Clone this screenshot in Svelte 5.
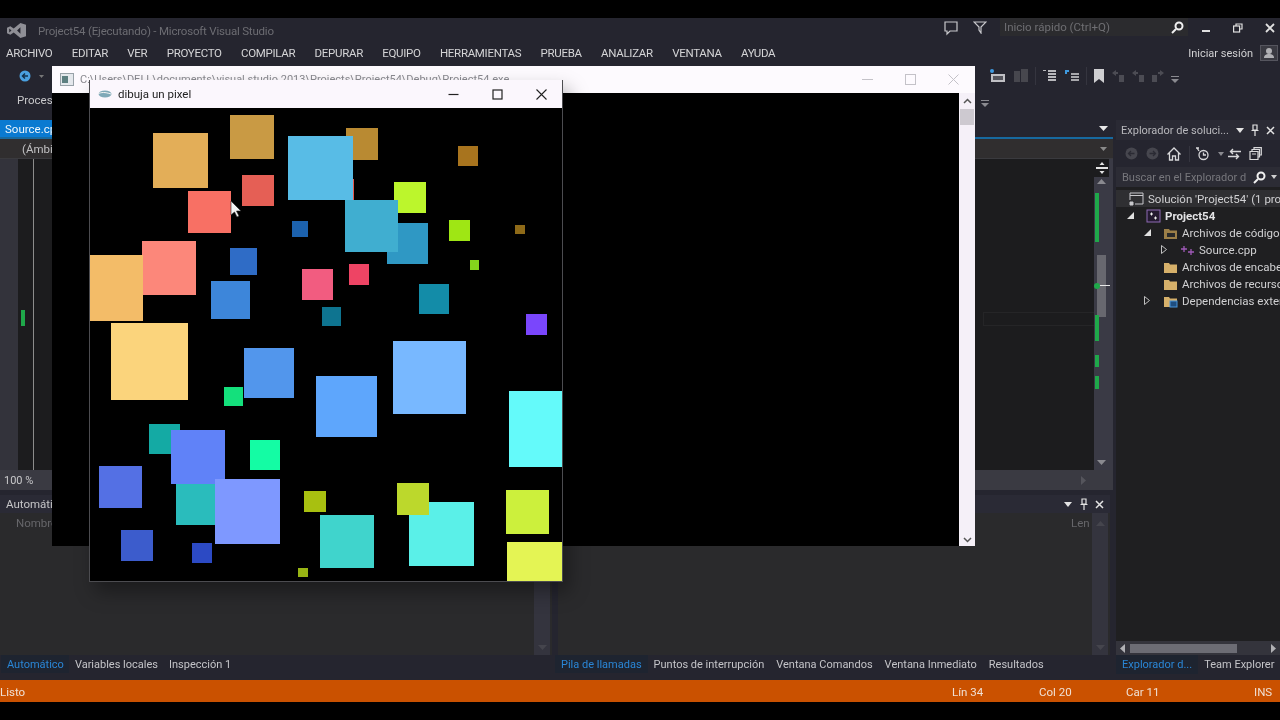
<script>
  const menu = ['ARCHIVO', 'EDITAR', 'VER', 'PROYECTO', 'COMPILAR', 'DEPURAR', 'EQUIPO', 'HERRAMIENTAS', 'PRUEBA', 'ANALIZAR', 'VENTANA', 'AYUDA'];

  // x1, y1, x2, y2 in page pixels, painted in this order
  const squares = [
    [153, 133, 208, 188, '#e3ae58'],
    [230, 115, 274, 159, '#c99a44'],
    [346, 128, 378, 160, '#b98a32'],
    [330, 179, 354, 200, '#e5594f'],
    [288, 136, 353, 200, '#58bce6'],
    [458, 146, 478, 166, '#a8741e'],
    [242, 175, 274, 206, '#e55f55'],
    [188, 191, 231, 233, '#f87064'],
    [394, 182, 426, 213, '#bcf62c'],
    [387, 223, 428, 264, '#2f98c4'],
    [345, 200, 398, 252, '#40aed0'],
    [292, 221, 308, 237, '#1c62ae'],
    [449, 220, 470, 241, '#9fe614'],
    [515, 225, 525, 234, '#8e6a18'],
    [470, 260, 479, 270, '#84d41c'],
    [230, 248, 257, 275, '#2f6cc6'],
    [142, 241, 196, 295, '#fc877a'],
    [90, 255, 143, 321, '#f3bc68'],
    [302, 269, 333, 300, '#f25c80'],
    [349, 264, 369, 285, '#ee4464'],
    [211, 281, 250, 319, '#3d86da'],
    [419, 284, 449, 314, '#138ca8'],
    [322, 307, 341, 326, '#0e7490'],
    [526, 314, 547, 335, '#7a46fc'],
    [111, 323, 188, 400, '#fbd47c'],
    [244, 348, 294, 398, '#5296ec'],
    [224, 387, 243, 406, '#14e07c'],
    [316, 376, 377, 437, '#5ea6fc'],
    [393, 341, 466, 414, '#78b8ff'],
    [509, 391, 563, 467, '#64fafa'],
    [149, 424, 180, 454, '#14aaa4'],
    [171, 430, 225, 484, '#6082f8'],
    [250, 440, 280, 470, '#14fca4'],
    [99, 466, 142, 508, '#5470e4'],
    [176, 484, 215, 525, '#2abcbc'],
    [215, 479, 280, 544, '#7e98ff'],
    [304, 491, 326, 512, '#a8c010'],
    [409, 502, 474, 566, '#5af0e8'],
    [397, 483, 429, 515, '#bcd82c'],
    [506, 490, 549, 534, '#ccf03c'],
    [320, 515, 374, 568, '#40d4cc'],
    [121, 530, 153, 561, '#3c5ccc'],
    [192, 543, 212, 563, '#2c4ac4'],
    [507, 542, 562, 581, '#e4f454'],
    [298, 568, 308, 577, '#98b414']
  ];

  const tree = [
    { depth: 0, label: "Solución 'Project54' (1 proyecto)", icon: 'sln', selected: true },
    { depth: 1, label: 'Project54', icon: 'proj', arrow: 'open', bold: true },
    { depth: 2, label: 'Archivos de código fuente', icon: 'openfolder', arrow: 'open' },
    { depth: 3, label: 'Source.cpp', icon: 'cpp', arrow: 'closed' },
    { depth: 2, label: 'Archivos de encabezado', icon: 'folder' },
    { depth: 2, label: 'Archivos de recursos', icon: 'folder' },
    { depth: 2, label: 'Dependencias externas', icon: 'deps', arrow: 'closed' }
  ];

  const leftTabs = ['Automático', 'Variables locales', 'Inspección 1'];
  const midTabs = ['Pila de llamadas', 'Puntos de interrupción', 'Ventana Comandos', 'Ventana Inmediato', 'Resultados'];
  const marks = [[193, 49], [315, 26], [355, 12], [376, 13]];
</script>

<div class="ide">
  <header class="titlebar">
    <svg class="logo" width="19" height="17" viewBox="0 0 17 18" preserveAspectRatio="none"><path d="M12 1l5 2v12l-5 2-6-6-3 2.500-3-1.500v-6l3-1.500 3 2.500zM12 5.500l-3 3.500 3 3.500zM2 7v4l2-2z" fill="#8f8f96" fill-rule="evenodd"/></svg>
    <span class="apptitle">Project54 (Ejecutando) - Microsoft Visual Studio</span>
    <div class="titleright">
      <svg width="16" height="16" viewBox="0 0 16 16" fill="none" stroke="#c8c8cc" stroke-width="1.200"><path d="M2 2h12v9H7l-3 3v-3H2z"/></svg>
      <svg class="filter" width="14" height="14" viewBox="0 0 14 14" fill="none" stroke="#c8c8cc" stroke-width="1.200"><path d="M1 2h12L8 7v6L6 10V7z"/></svg>
      <div class="quick">
        <span>Inicio rápido (Ctrl+Q)</span>
        <svg width="13" height="13" viewBox="0 0 13 13" fill="none" stroke="#f0f0f0" stroke-width="2"><circle cx="8" cy="5" r="3.500"/><path d="M5 8l-4 4"/></svg>
      </div>
      <div class="winbtns">
        <svg width="10" height="10" viewBox="0 0 10 10"><rect x="1" y="7" width="8" height="2" fill="#e0e0e0"/></svg>
        <svg width="10" height="10" viewBox="0 0 10 10" fill="none" stroke="#e0e0e0" stroke-width="1.200"><rect x="0.600" y="3" width="6" height="6"/><path d="M3 3V1h6v5H7"/></svg>
        <svg width="10" height="10" viewBox="0 0 10 10" stroke="#e0e0e0" stroke-width="1.800"><path d="M1 1l8 8M9 1l-8 8"/></svg>
      </div>
    </div>
  </header>

  <nav class="menubar">
    {#each menu as item}
      <span>{item}</span>
    {/each}
    <div class="signin">
      Iniciar sesión
      <svg width="18" height="16" viewBox="0 0 18 16"><rect x="0.500" y="0.500" width="17" height="15" fill="#3a3a42" stroke="#55555e"/><circle cx="9" cy="6" r="3" fill="#b0b0b4"/><path d="M4 13c0-3 2-4 5-4s5 1 5 4z" fill="#b0b0b4"/></svg>
    </div>
  </nav>

  <div class="toolbar">
    <svg class="back" width="26" height="14" viewBox="0 0 26 14"><circle cx="6" cy="7" r="5.500" fill="#4aa0e0"/><path d="M9 7H4M6 4.500L3.500 7 6 9.500" stroke="#12324e" stroke-width="1.500" fill="none"/><path d="M20 6h5l-2.500 3z" fill="#777"/></svg>
    <div class="tools">
      <svg width="18" height="16" viewBox="0 0 18 16"><circle cx="3" cy="3" r="2" fill="#3f9ae0"/><path d="M2 6h14v8H2z" fill="#c0c0c4"/><path d="M4 8h10v4H4z" fill="#55555c"/></svg>
      <svg width="16" height="16" viewBox="0 0 16 16" fill="#47474e"><path d="M1 3h6v11H1zM8 1h7v13H8z"/></svg>
      <i class="sep"></i>
      <svg width="16" height="14" viewBox="0 0 16 14" fill="#b8b8bc"><path d="M1 1h3v1H1zM6 1h8v2H6zM6 4h8v2H6zM6 7h8v2H6zM6 10h8v2H6z"/></svg>
      <svg width="16" height="14" viewBox="0 0 16 14"><path d="M1 1h4v2H3v2H1z" fill="#3f9ae0"/><path d="M7 4h8v2H7zM7 7h8v2H7zM7 10h8v2H7z" fill="#a8a8ac"/></svg>
      <i class="sep"></i>
      <svg width="12" height="14" viewBox="0 0 12 14"><path d="M1 0h10v14l-5-4-5 4z" fill="#cfcfd2"/></svg>
      <svg width="14" height="14" viewBox="0 0 14 14" fill="#4c4c54"><path d="M1 4l4-3v2h2v2H5v2zM8 6h5v7H8z"/></svg>
      <svg width="14" height="14" viewBox="0 0 14 14" fill="#4c4c54"><path d="M1 4l4-3v2h2v2H5v2zM8 6h5v7H8z"/></svg>
      <svg width="14" height="14" viewBox="0 0 14 14" fill="#4c4c54"><path d="M13 4L9 1v2H7v2h2v2zM1 6h5v7H1z"/></svg>
      <svg class="more" width="8" height="8" viewBox="0 0 8 8" fill="#8a8a90"><path d="M0 0h8v1H0zM0 3h8L4 7z"/></svg>
    </div>
  </div>

  <div class="toolbar second">
    <span class="process">Proceso: [4532] Project54.exe</span>
    <svg class="more2" width="8" height="8" viewBox="0 0 8 8" fill="#8a8a90"><path d="M0 0h8v1H0zM0 3h8L4 7z"/></svg>
  </div>

  <div class="work">
    <div class="center">
      <div class="tabstrip">
        <span class="doctab">Source.cpp</span>
        <svg width="9" height="5" viewBox="0 0 9 5" fill="#e8e8e8"><path d="M0 0h9L4.500 5z"/></svg>
      </div>
      <div class="blueline"></div>
      <div class="navbar">
        <span>(Ámbito global)</span>
        <svg width="7" height="4" viewBox="0 0 7 4" fill="#8a8a8a"><path d="M0 0h7L3.500 4z"/></svg>
      </div>
      <div class="editor">
        <div class="margin"></div>
        <div class="glyphs">
          <i class="change"></i>
          <i class="vline"></i>
        </div>
        <div class="code">
          <i class="curline"></i>
        </div>
        <div class="vscroll">
          <div class="split"><svg width="12" height="12" viewBox="0 0 12 12" fill="#e4e4e4"><path d="M0 5h12v2H0zM6 0l2.500 3h-5zM6 12l-2.500-3h5z"/></svg></div>
          <svg class="up" width="9" height="5" viewBox="0 0 9 5" fill="#8a8a90"><path d="M0 5h9L4.500 0z"/></svg>
          <i class="thumb"></i>
          {#each marks as m}
            <i class="mark" style="top: {m[0] - 159}px; height: {m[1]}px"></i>
          {/each}
          <i class="caret"></i>
          <i class="dot"></i>
          <svg class="down" width="9" height="5" viewBox="0 0 9 5" fill="#8a8a90"><path d="M0 0h9L4.500 5z"/></svg>
        </div>
      </div>
      <div class="hscroll">
        <span class="zoomlevel">100 %</span>
        <svg class="right" width="5" height="9" viewBox="0 0 5 9" fill="#55555c"><path d="M0 0l5 4.500L0 9z"/></svg>
      </div>

      <div class="panels">
        <section class="panel left">
          <div class="panelhead"><span>Automático</span></div>
          <div class="panelbody">
            <span class="colname">Nombre</span>
            <div class="pscroll">
              <svg width="9" height="5" viewBox="0 0 9 5" fill="#45454d"><path d="M0 0h9L4.500 5z"/></svg>
            </div>
          </div>
        </section>
        <section class="panel mid">
          <div class="panelhead">
            <span></span>
            <div class="headbtns">
              <svg width="8" height="5" viewBox="0 0 8 5" fill="#e4e4e4"><path d="M0 0h8L4 5z"/></svg>
              <svg width="8" height="12" viewBox="0 0 8 12" fill="none" stroke="#e4e4e4" stroke-width="1.200"><path d="M2 1h4v5H2zM0.500 6.500h7M4 7v5"/></svg>
              <svg width="9" height="9" viewBox="0 0 9 9" stroke="#e4e4e4" stroke-width="1.500"><path d="M1 1l7 7M8 1l-7 7"/></svg>
            </div>
          </div>
          <div class="panelbody">
            <span class="colname lang">Lenguaje</span>
            <div class="pscroll">
              <svg width="9" height="5" viewBox="0 0 9 5" fill="#45454d"><path d="M0 5h9L4.500 0z"/></svg>
              <svg width="9" height="5" viewBox="0 0 9 5" fill="#45454d"><path d="M0 0h9L4.500 5z"/></svg>
            </div>
          </div>
        </section>
      </div>

      <div class="bottomtabs">
        <div class="tabgroup first">
          {#each leftTabs as t, i}
            <span class:active={i === 0}>{t}</span>
          {/each}
        </div>
        <div class="tabgroup">
          {#each midTabs as t, i}
            <span class:active={i === 0}>{t}</span>
          {/each}
        </div>
      </div>
    </div>

    <aside class="side">
      <div class="sidehead">
        <span class="sidetitle">Explorador de soluci...</span>
        <svg width="8" height="5" viewBox="0 0 8 5" fill="#e4e4e4"><path d="M0 0h8L4 5z"/></svg>
        <svg width="8" height="12" viewBox="0 0 8 12" fill="none" stroke="#e4e4e4" stroke-width="1.200"><path d="M2 1h4v5H2zM0.500 6.500h7M4 7v5"/></svg>
        <svg width="9" height="9" viewBox="0 0 9 9" stroke="#e4e4e4" stroke-width="1.500"><path d="M1 1l7 7M8 1l-7 7"/></svg>
      </div>
      <div class="sidetools">
        <svg width="13" height="13" viewBox="0 0 13 13"><circle cx="6.500" cy="6.500" r="6" fill="#46464e"/><path d="M9.500 6.500h-6M6 4L3.500 6.500 6 9" stroke="#2a2a33" stroke-width="1.300" fill="none"/></svg>
        <svg width="13" height="13" viewBox="0 0 13 13"><circle cx="6.500" cy="6.500" r="6" fill="#46464e"/><path d="M3.500 6.500h6M7 4l2.500 2.500L7 9" stroke="#2a2a33" stroke-width="1.300" fill="none"/></svg>
        <svg width="14" height="14" viewBox="0 0 14 14" fill="none" stroke="#d8d8da" stroke-width="1.300"><path d="M0.500 7.500L7 1l6.500 6.500M2.500 6v7h3V9h3v4h3V6"/></svg>
        <i class="sep short"></i>
        <svg class="timer" width="14" height="14" viewBox="0 0 14 14" fill="none" stroke="#d8d8da" stroke-width="1.300"><circle cx="7.500" cy="8" r="4.500"/><path d="M7.500 5.500V8h2.500M1 1l2 3M0 1h3"/></svg>
        <svg width="6" height="4" viewBox="0 0 6 4" fill="#8a8a90"><path d="M0 0h6L3 4z"/></svg>
        <svg class="sync" width="13" height="12" viewBox="0 0 13 12" fill="none" stroke="#d8d8da" stroke-width="1.400"><path d="M13 3.500H3M5 1L2.500 3.500 5 6M0 8.500h10M8 6l2.500 2.500L8 11"/></svg>
        <svg width="13" height="13" viewBox="0 0 13 13" fill="none" stroke="#d8d8da" stroke-width="1.200"><path d="M1 4.500h8v8H1zM3 4V2.500h7.500V10H9.500M5 2V0.700h7.300V8H11M3 7h4"/></svg>
      </div>
      <div class="sidesearch">
        <span>Buscar en el Explorador d</span>
        <svg width="13" height="13" viewBox="0 0 13 13" fill="none" stroke="#f0f0f0" stroke-width="2"><circle cx="8" cy="5" r="3.500"/><path d="M5 8l-4 4"/></svg>
        <svg width="6" height="4" viewBox="0 0 6 4" fill="#d0d0d0"><path d="M0 0h6L3 4z"/></svg>
      </div>
      <div class="tree">
        {#each tree as node}
          <div class="row" class:selected={node.selected} class:bold={node.bold} style="padding-left: {node.depth * 17 + 2}px">
            <span class="arrow">
              {#if node.arrow === 'open'}
                <svg width="7" height="7" viewBox="0 0 7 7" fill="#e0e0e0"><path d="M7 0v7H0z"/></svg>
              {:else if node.arrow === 'closed'}
                <svg width="6" height="9" viewBox="0 0 6 9" fill="none" stroke="#c0c0c0"><path d="M0.500 0.500l5 4-5 4z"/></svg>
              {/if}
            </span>
            <span class="nodeicon">
              {#if node.icon === 'sln'}
                <svg width="15" height="14" viewBox="0 0 15 14" fill="none" stroke="#c8c8cc"><path d="M1 1h13v11H6M1 3.500h13M1 1v7"/><path d="M1 10h3v3H1z" fill="#c8c8cc"/></svg>
              {:else if node.icon === 'proj'}
                <svg width="15" height="14" viewBox="0 0 15 14"><rect x="1" y="1" width="13" height="12" fill="#241a30" stroke="#8e6ab4"/><path d="M4 5h3M5.500 3.500v3M8 9h3M9.500 7.500v3" stroke="#eee"/></svg>
              {:else if node.icon === 'cpp'}
                <svg width="15" height="14" viewBox="0 0 15 14" fill="none" stroke="#a05ab8" stroke-width="1.300"><path d="M1 6h6M4 3v6M8 9h6M11 6v6"/></svg>
              {:else}
                <svg width="15" height="14" viewBox="0 0 15 14"><path d="M1 3h5l1 1.500h7V13H1z" fill={node.icon === 'openfolder' ? '#9c7f48' : '#d6b06a'}/>
                  {#if node.icon === 'openfolder'}<path d="M4 7h8v4H4z" fill="#2a2a2a"/>{/if}
                  {#if node.icon === 'deps'}<rect x="7" y="7" width="7" height="6" fill="#1f4e80" stroke="#4a94d8"/>{/if}
                </svg>
              {/if}
            </span>
            <span>{node.label}</span>
          </div>
        {/each}
        <div class="treespace"></div>
        <div class="treescroll">
          <svg width="5" height="9" viewBox="0 0 5 9" fill="#b0b0b4"><path d="M5 0v9L0 4.500z"/></svg>
          <i></i>
          <svg width="5" height="9" viewBox="0 0 5 9" fill="#b0b0b4"><path d="M0 0v9l5-4.500z"/></svg>
        </div>
      </div>
      <div class="sidetabs">
        <span class="active">Explorador d...</span>
        <span>Team Explorer</span>
      </div>
    </aside>
  </div>

  <footer class="status">
    <span class="ready">Listo</span>
    <span class="cell">Lín 34</span>
    <span class="cell">Col 20</span>
    <span class="cell">Car 11</span>
    <span class="ins">INS</span>
  </footer>
</div>

<!-- console window -->
<div class="console">
  <div class="wtitle">
    <svg width="14" height="13" viewBox="0 0 14 13"><rect x="0.500" y="0.500" width="13" height="12" fill="#e4e8ec" stroke="#98a2a8"/><rect x="2" y="3" width="6" height="7" fill="#5d7f80"/></svg>
    <span class="path">C:\Users\DELL\documents\visual studio 2013\Projects\Project54\Debug\Project54.exe</span>
    <div class="wbtns faded">
      <svg width="11" height="11" viewBox="0 0 11 11" stroke="#c4c2c8"><path d="M0 5.500h11"/></svg>
      <svg width="11" height="11" viewBox="0 0 11 11" stroke="#c4c2c8" fill="none"><rect x="0.500" y="0.500" width="10" height="10"/></svg>
      <svg width="11" height="11" viewBox="0 0 11 11" stroke="#c4c2c8"><path d="M0.500 0.500l10 10M10.500 0.500l-10 10"/></svg>
    </div>
  </div>
  <div class="cbody">
    <div class="cclient"></div>
    <div class="cscroll">
      <svg width="9" height="6" viewBox="0 0 9 6" fill="none" stroke="#555" stroke-width="1.500"><path d="M1 5l3.500-3.500L8 5"/></svg>
      <i></i>
      <svg class="cdown" width="9" height="6" viewBox="0 0 9 6" fill="none" stroke="#555" stroke-width="1.500"><path d="M1 1l3.500 3.500L8 1"/></svg>
    </div>
  </div>
</div>

<!-- graphics window -->
<div class="pixelwin">
  <div class="wtitle front">
    <svg width="14" height="8" viewBox="0 0 14 8"><ellipse cx="7" cy="4" rx="6.500" ry="3.500" fill="#7fa9b8"/><path d="M0 4c3-2 7-2 13 0" stroke="#f4f4f4" fill="none"/></svg>
    <span class="wname">dibuja un pixel</span>
    <div class="wbtns">
      <svg width="11" height="11" viewBox="0 0 11 11" stroke="#222" stroke-width="1.200"><path d="M0.500 5.500h10"/></svg>
      <svg width="11" height="11" viewBox="0 0 11 11" stroke="#222" stroke-width="1.200" fill="none"><rect x="1" y="1" width="9" height="9"/></svg>
      <svg width="11" height="11" viewBox="0 0 11 11" stroke="#222" stroke-width="1.100"><path d="M0.500 0.500l10 10M10.500 0.500l-10 10"/></svg>
    </div>
  </div>
  <div class="canvas">
    {#each squares as s}
      <i style="left: {s[0] - 90}px; top: {s[1] - 108}px; width: {s[2] - s[0]}px; height: {s[3] - s[1]}px; background: {s[4]}"></i>
    {/each}
    <svg class="cursor" width="12" height="18" viewBox="0 0 12 18"><path d="M1 1v14l3.500-3 2.500 5 2-1-2.500-5H11z" fill="#f4f4f4" stroke="#222" stroke-width="0.600"/></svg>
  </div>
</div>

<style>
  :global(body) {
    margin: 0;
    background: #000;
    overflow: hidden;
  }

  i { display: block; }

  .ide {
    width: 1280px;
    height: 684px;
    margin-top: 18px;
    display: flex;
    flex-direction: column;
    background: #25252f;
    color: #d8d8da;
    font: 11.500px Roboto, "Noto Sans", sans-serif;
    filter: blur(0.35px);
    overflow: hidden;
  }

  .titlebar {
    height: 24px;
    display: flex;
    align-items: flex-start;
    padding-left: 7px;
    flex: none;
  }
  .logo { margin-top: 4px; }
  .apptitle {
    margin: 6px 0 0 12px;
    color: #6c6c72;
    letter-spacing: -0.2px;
  }
  .titleright {
    margin-left: auto;
    display: flex;
    align-items: flex-start;
  }
  .titleright > svg { margin-top: 2px; }
  .filter { margin-left: 14px; margin-right: 13px; }
  .quick {
    width: 188px;
    height: 18px;
    box-sizing: border-box;
    padding: 0 4px;
    background: #2b2b2e;
    color: #6e6e72;
    display: flex;
    align-items: center;
    justify-content: space-between;
  }
  .winbtns {
    width: 92px;
    display: flex;
    justify-content: space-between;
    padding: 5px 5px 0 13px;
    box-sizing: border-box;
  }

  .menubar {
    height: 22px;
    flex: none;
    display: flex;
    align-items: center;
    gap: 19.300px;
    padding: 0 0 1px 6px;
    box-sizing: border-box;
    color: #d4d4d6;
    letter-spacing: -0.3px;
  }
  .signin {
    margin-left: auto;
    display: flex;
    align-items: center;
    gap: 7px;
    padding: 1px 2px 0 0;
    font-size: 11px;
    letter-spacing: 0;
    color: #d0d0d2;
  }

  .toolbar {
    height: 24px;
    flex: none;
    display: flex;
    align-items: center;
    padding-left: 19px;
  }
  .tools {
    margin-left: 944px;
    display: flex;
    align-items: center;
    gap: 6px;
  }
  .sep { width: 1px; height: 18px; background: #35353f; }
  .sep.short { height: 16px; }
  .more { margin-top: 8px; }
  .second { padding-left: 17px; }
  .process { color: #c8c8ca; width: 964px; white-space: nowrap; }
  .more2 { margin-top: 8px; }

  .work {
    flex: 1;
    display: flex;
    min-height: 0;
  }
  .center {
    width: 1113px;
    flex: none;
    display: flex;
    flex-direction: column;
  }

  .tabstrip {
    height: 25px;
    display: flex;
    align-items: flex-end;
    justify-content: space-between;
    padding-right: 5px;
  }
  .tabstrip svg { margin-bottom: 6px; }
  .doctab {
    background: #0a7ad1;
    color: #eef6fc;
    height: 17px;
    line-height: 18px;
    padding: 0 8px 0 5px;
  }
  .blueline { height: 2px; background: #17699f; }
  .navbar {
    height: 20px;
    background: #302e2f;
    border-bottom: 1px solid #3a3a3e;
    box-sizing: border-box;
    display: flex;
    align-items: center;
    justify-content: space-between;
    padding: 0 6px 0 22px;
    color: #c0c0c2;
  }

  .editor {
    height: 311px;
    display: flex;
    background: #1c1c1e;
  }
  .margin { width: 18px; background: #33333b; }
  .glyphs {
    width: 32px;
    position: relative;
  }
  .change {
    position: absolute;
    left: 3px;
    top: 151px;
    width: 4px;
    height: 16px;
    background: #1fa84a;
  }
  .vline {
    position: absolute;
    left: 15px;
    top: 0;
    bottom: 0;
    width: 1px;
    background: #8c8c8c;
  }
  .code { flex: 1; position: relative; }
  .curline {
    position: absolute;
    left: 933px;
    right: 0;
    top: 153px;
    height: 12px;
    border: 1px solid #252527;
    border-right: 0;
  }
  .vscroll {
    width: 19px;
    position: relative;
    background: #3a3a45;
  }
  .split {
    width: 15px;
    height: 18px;
    background: #1c1c1e;
    display: flex;
    align-items: center;
    justify-content: center;
  }
  .up { position: absolute; left: 3px; top: 20px; }
  .down { position: absolute; left: 3px; top: 301px; }
  .thumb {
    position: absolute;
    left: 3px;
    top: 96px;
    width: 9px;
    height: 62px;
    background: #68686f;
  }
  .mark {
    position: absolute;
    left: 1px;
    width: 4px;
    background: #1fa84a;
  }
  .caret {
    position: absolute;
    left: 2px;
    top: 126px;
    width: 14px;
    height: 1px;
    background: #e8e8e8;
  }
  .dot {
    position: absolute;
    left: 0;
    top: 124px;
    width: 6px;
    height: 6px;
    border-radius: 50%;
    background: #1fa84a;
  }

  .hscroll {
    height: 20px;
    margin-bottom: 5px;
    display: flex;
    align-items: center;
    justify-content: space-between;
    padding: 0 27px 0 4px;
    background: #3a3a42;
    color: #c8c8ca;
    font-size: 11px;
  }

  .panels {
    height: 160px;
    display: flex;
    gap: 6px;
  }
  .panel {
    display: flex;
    flex-direction: column;
    background: #2a2a2c;
    width: 552px;
  }
  .panelhead {
    height: 18px;
    background: #2a2a35;
    display: flex;
    align-items: center;
    justify-content: space-between;
    padding-left: 6px;
    color: #c4c4c6;
  }
  .headbtns {
    display: flex;
    align-items: center;
    gap: 7.500px;
    padding-right: 6px;
  }
  .panelbody {
    flex: 1;
    position: relative;
    padding: 3px 0 0 16px;
    color: #66666a;
  }
  .colname.lang {
    position: absolute;
    right: 20px;
    top: 3px;
    width: 19px;
    overflow: hidden;
    white-space: nowrap;
  }
  .pscroll {
    position: absolute;
    right: 2px;
    top: 0;
    bottom: 0;
    width: 16px;
    background: #34343e;
    display: flex;
    flex-direction: column;
    justify-content: flex-end;
    align-items: center;
    padding: 8px 0 5px;
    box-sizing: border-box;
  }
  .mid .pscroll { justify-content: space-between; }
  .mid .panelbody { padding-left: 0; }

  .bottomtabs {
    height: 23px;
    display: flex;
    gap: 3px;
    font-size: 11px;
  }
  .tabgroup {
    width: 552px;
    display: flex;
    align-items: flex-start;
    color: #c4c4c8;
  }
  .tabgroup.first { padding-left: 1px; box-sizing: border-box; }
  .tabgroup span {
    height: 18px;
    line-height: 20px;
    padding: 0 6px;
  }
  .tabgroup.first span { padding: 0 5px 0 6px; }
  .tabgroup span.active {
    color: #2a86d6;
    background: #1e2430;
  }

  .side {
    flex: 1;
    min-width: 0;
    display: flex;
    flex-direction: column;
    padding: 8px 0 2px 3px;
    overflow: hidden;
  }
  .sidehead {
    height: 20px;
    display: flex;
    align-items: center;
    gap: 7px;
    padding: 0 6px 0 5px;
    background: #2a2a34;
    color: #b8b8bc;
    font-size: 11px;
    white-space: nowrap;
  }
  .sidehead svg { flex: none; }
  .sidetitle { flex: 1; }
  .sidetools {
    height: 27px;
    display: flex;
    align-items: center;
    gap: 8px;
    padding-left: 9px;
  }
  .timer { margin-left: -2px; }
  .sync { margin-left: -4px; }
  .sidesearch {
    height: 20px;
    display: flex;
    align-items: center;
    gap: 5px;
    padding: 0 3px 0 6px;
    background: #2c2c35;
    color: #77777c;
    font-size: 11px;
    white-space: nowrap;
  }
  .sidesearch span { flex: 1; overflow: hidden; }
  .tree {
    flex: 1;
    background: #1f1f21;
    display: flex;
    flex-direction: column;
    padding-top: 3px;
    color: #d0d0d2;
    white-space: nowrap;
    overflow: hidden;
  }
  .row {
    height: 17px;
    flex: none;
    display: flex;
    align-items: center;
  }
  .row.selected { background: #2f2f32; }
  .row.bold { font-weight: 700; color: #e4e4e6; }
  .arrow {
    width: 19px;
    margin-left: -8px;
    flex: none;
    display: flex;
    align-items: center;
  }
  .nodeicon {
    width: 15px;
    margin-right: 4px;
    flex: none;
    display: flex;
    align-items: center;
  }
  .treespace { flex: 1; }
  .treescroll {
    height: 14px;
    flex: none;
    display: flex;
    align-items: center;
    justify-content: space-between;
    padding: 0 4px;
    background: #34343c;
  }
  .treescroll i {
    width: 107px;
    height: 9px;
    margin: 0 auto 0 5px;
    background: #6c6c74;
  }
  .sidetabs {
    height: 23px;
    flex: none;
    display: flex;
    align-items: flex-start;
    color: #c4c4c8;
    font-size: 11px;
    white-space: nowrap;
  }
  .sidetabs span {
    height: 19px;
    line-height: 20px;
    padding: 0 6px;
  }
  .sidetabs .active {
    color: #2a86d6;
    background: #1e2430;
  }

  .status {
    height: 22px;
    flex: none;
    background: #ca5100;
    color: #f0e0d4;
    display: flex;
    align-items: center;
    padding-top: 1px;
    box-sizing: border-box;
  }
  .ready { width: 952px; }
  .cell { width: 87px; }
  .ins { margin-left: 41px; }

  .console {
    position: absolute;
    left: 52px;
    top: 66px;
    width: 923px;
    height: 480px;
    display: flex;
    flex-direction: column;
    font: 11px Roboto, "Noto Sans", sans-serif;
    filter: blur(0.3px);
  }
  .wtitle {
    height: 27px;
    flex: none;
    display: flex;
    align-items: center;
    padding-left: 8px;
    background: #fdfafe;
    color: #333;
  }
  .path {
    margin-left: 6px;
    color: #8a8a90;
  }
  .wbtns {
    margin-left: auto;
    display: flex;
    gap: 32px;
    padding-right: 16px;
  }
  .cbody {
    flex: 1;
    display: flex;
    min-height: 0;
  }
  .cclient { flex: 1; background: #000; }
  .cscroll {
    width: 16px;
    background: #f5f0f8;
    display: flex;
    flex-direction: column;
    align-items: center;
    padding-top: 5px;
  }
  .cscroll i {
    width: 14px;
    height: 16px;
    margin-top: 5px;
    background: #cdc9d0;
  }
  .cdown { margin-top: auto; margin-bottom: 3px; }

  .pixelwin {
    position: absolute;
    left: 89px;
    top: 80px;
    width: 474px;
    height: 502px;
    box-sizing: border-box;
    border: 1px solid #4c4c50;
    border-top: 0;
    box-shadow: 6px 10px 18px rgba(0, 0, 0, 0.35);
    display: flex;
    flex-direction: column;
    font: 11.500px Roboto, "Noto Sans", sans-serif;
    filter: blur(0.3px);
  }
  .front {
    height: 28px;
    padding-left: 8px;
    background: #fbf7fd;
  }
  .wname { margin-left: 6px; color: #222; }
  .front .wbtns { gap: 33px; padding-right: 15px; }
  .canvas {
    flex: 1;
    position: relative;
    background: #000;
    overflow: hidden;
  }
  .canvas i { position: absolute; }
  .cursor {
    position: absolute;
    left: 140px;
    top: 92px;
  }
</style>
